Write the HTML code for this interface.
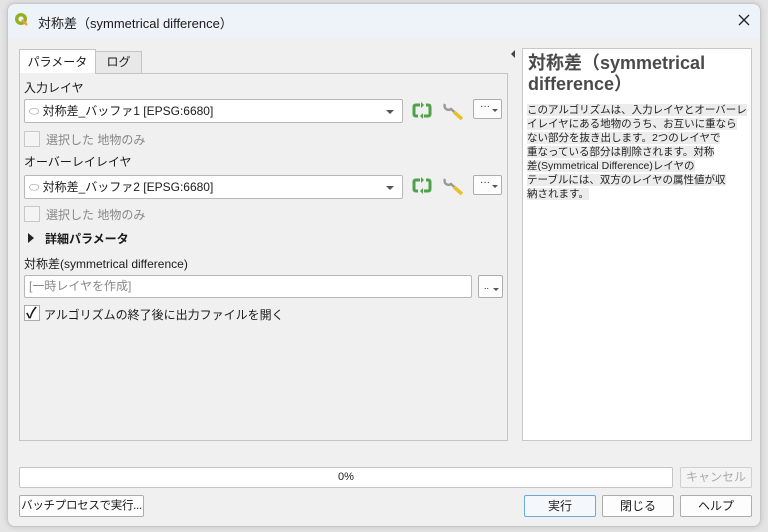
<!DOCTYPE html>
<html><head><meta charset="utf-8"><style>
*{box-sizing:border-box;margin:0;padding:0}
body{width:768px;height:532px;background:#e4e4e4;font-family:"Liberation Sans","Noto Sans CJK JP",sans-serif;font-size:12px;color:#1a1a1a;position:relative;overflow:hidden}
.a{position:absolute}
#win{left:7px;top:3px;width:754px;height:524px;background:#f0f0f0;border:1px solid #c8c8c8;border-radius:8px;overflow:hidden;box-shadow:0 0 6px rgba(0,0,0,.15)}
#title{left:0;top:0;width:754px;height:34px;background:#eef3f9}
.btn{position:absolute;background:#fdfdfd;border:1px solid #adadad;border-radius:2px;text-align:center;font-size:12px;line-height:19px;white-space:nowrap;overflow:hidden}
.combo{position:absolute;background:#fff;border:1px solid #b8b8b8;border-radius:2px;height:24px;line-height:22px;padding-left:4px;white-space:nowrap}
.chk{position:absolute;width:16px;height:16px;border:1px solid #c8c8c8;background:#f4f4f4}
.lbl{position:absolute;font-size:12px;white-space:nowrap}
.dd{position:absolute;right:8px;top:10px;width:0;height:0;border-left:4px solid transparent;border-right:4px solid transparent;border-top:4px solid #555}
.more{position:absolute;background:#fdfdfd;border:1px solid #adadad;border-radius:2px;width:29px;height:20px}
.hl{display:block;white-space:nowrap}
.hl span{background:#ececec}
</style></head><body>
<div id="win" class="a">
 <div id="title" class="a">
  <svg class="a" style="left:6px;top:8px" width="15" height="15" viewBox="0 0 15 15"><circle cx="7" cy="7" r="6" fill="#93b023"/><circle cx="7" cy="7" r="2.6" fill="#eef3f9"/><path d="M8 8 L13 13" stroke="#e9a23b" stroke-width="2.5"/></svg>
  <div class="lbl" style="left:30px;top:9px;font-size:13px">対称差（symmetrical difference）</div>
  <svg class="a" style="left:730px;top:10px" width="12" height="12"><path d="M1 1L11 11M11 1L1 11" stroke="#222" stroke-width="1.3"/></svg>
 </div>
</div>
<!-- tabs -->
<div class="a" style="left:19px;top:49px;width:77px;height:25px;background:#fff;border:1px solid #c4c4c4;border-bottom:none;text-align:center;line-height:24px">パラメータ</div>
<div class="a" style="left:95px;top:51px;width:47px;height:22px;background:#e8e8e8;border:1px solid #c4c4c4;border-bottom:none;text-align:center;line-height:21px">ログ</div>
<div class="a" style="left:19px;top:73px;width:489px;height:368px;border:1px solid #c4c4c4;background:#f0f0f0"></div>
<div class="a" style="left:20px;top:73px;width:75px;height:1px;background:#f0f0f0"></div>

<div class="lbl" style="left:24px;top:79px">入力レイヤ</div>
<div class="combo" style="left:24px;top:99px;width:379px"><span style="color:#999">⬭</span> 対称差_バッファ1 [EPSG:6680]<div class="dd"></div></div>
<div class="chk" style="left:24px;top:131px"></div>
<div class="lbl" style="left:46px;top:131px;color:#888">選択した 地物のみ</div>
<div class="lbl" style="left:24px;top:153px">オーバーレイレイヤ</div>
<div class="combo" style="left:24px;top:175px;width:379px"><span style="color:#999">⬭</span> 対称差_バッファ2 [EPSG:6680]<div class="dd"></div></div>
<div class="chk" style="left:24px;top:206px"></div>
<div class="lbl" style="left:46px;top:206px;color:#888">選択した 地物のみ</div>

<!-- icons row -->
<svg class="a" style="left:411px;top:102px" width="22" height="18" viewBox="0 0 22 18"><path d="M9 3H5Q3 3 3 5V12Q3 14 5 14H7M13 14H17Q19 14 19 12V5Q19 3 17 3H15" stroke="#4ea24a" stroke-width="3" fill="none"/><path d="M10 0L13 3L10 6Z M12 11L9 14L12 17Z" fill="#4ea24a"/></svg>
<svg class="a" style="left:443px;top:101px" width="22" height="20" viewBox="0 0 22 20"><path d="M2 3A4 4 0 0 0 8 8L18 17" stroke="#999" stroke-width="2.5" fill="none"/><path d="M11 11L19 18" stroke="#e5c12a" stroke-width="3.5"/></svg>
<div class="more" style="left:473px;top:99px"><span class="a" style="left:6px;top:1px;font-size:10px">···</span><div class="dd" style="right:3px;top:9px;border-width:3px"></div></div>
<svg class="a" style="left:411px;top:177px" width="22" height="18" viewBox="0 0 22 18"><path d="M9 3H5Q3 3 3 5V12Q3 14 5 14H7M13 14H17Q19 14 19 12V5Q19 3 17 3H15" stroke="#4ea24a" stroke-width="3" fill="none"/><path d="M10 0L13 3L10 6Z M12 11L9 14L12 17Z" fill="#4ea24a"/></svg>
<svg class="a" style="left:443px;top:176px" width="22" height="20" viewBox="0 0 22 20"><path d="M2 3A4 4 0 0 0 8 8L18 17" stroke="#999" stroke-width="2.5" fill="none"/><path d="M11 11L19 18" stroke="#e5c12a" stroke-width="3.5"/></svg>
<div class="more" style="left:473px;top:175px"><span class="a" style="left:6px;top:1px;font-size:10px">···</span><div class="dd" style="right:3px;top:9px;border-width:3px"></div></div>

<div class="a" style="left:28px;top:233px;width:0;height:0;border-top:5px solid transparent;border-bottom:5px solid transparent;border-left:6px solid #222"></div>
<div class="lbl" style="left:45px;top:230px;font-weight:bold">詳細パラメータ</div>
<div class="lbl" style="left:24px;top:255px">対称差(symmetrical difference)</div>
<div class="combo" style="left:24px;top:275px;width:448px;height:23px;line-height:21px;color:#888">[一時レイヤを作成]</div>
<div class="more" style="left:478px;top:275px;width:25px;height:23px"><span class="a" style="left:5px;top:5px;font-size:9px">..</span><div class="dd" style="right:3px;top:12px;border-width:3px"></div></div>
<div class="chk" style="left:24px;top:305px;background:#fff;border-color:#aaa"></div>
<div class="lbl" style="left:26px;top:302px;font-size:15px;font-weight:bold">✓</div>
<div class="lbl" style="left:44px;top:306px">アルゴリズムの終了後に出力ファイルを開く</div>

<!-- right help -->
<div class="a" style="left:511px;top:50px;width:0;height:0;border-top:4px solid transparent;border-bottom:4px solid transparent;border-right:4px solid #444"></div>
<div class="a" style="left:522px;top:48px;width:230px;height:393px;background:#fff;border:1px solid #c8c8c8"></div>
<div class="lbl" style="left:528px;top:53px;font-size:18px;font-weight:bold;color:#4a4a4a;line-height:21px;white-space:normal;width:220px">対称差（symmetrical<br>difference）</div>
<div class="lbl" style="left:527px;top:103px;width:222px;overflow:hidden;font-size:10.5px;line-height:14px;color:#222">
<span class="hl"><span>このアルゴリズムは、入力レイヤとオーバーレ</span></span>
<span class="hl"><span>イレイヤにある地物のうち、お互いに重なら</span></span>
<span class="hl"><span>ない部分を抜き出します。2つのレイヤで</span></span>
<span class="hl"><span>重なっている部分は削除されます。対称</span></span>
<span class="hl"><span>差(Symmetrical Difference)レイヤの</span></span>
<span class="hl"><span>テーブルには、双方のレイヤの属性値が収</span></span>
<span class="hl"><span>納されます。</span></span>
</div>

<!-- bottom -->
<div class="a" style="left:19px;top:467px;width:654px;height:21px;background:#fff;border:1px solid #c4c4c4;border-radius:2px;text-align:center;line-height:19px;font-size:11px">0%</div>
<div class="btn" style="left:680px;top:467px;width:72px;height:21px;color:#aaa;background:#f4f4f4;border-color:#d0d0d0">キャンセル</div>
<div class="btn" style="left:19px;top:495px;width:125px;height:22px;line-height:20px;font-size:11.5px;letter-spacing:-0.3px">バッチプロセスで実行...</div>
<div class="btn" style="left:524px;top:495px;width:72px;height:22px;line-height:20px;border-color:#6aa8de;background:#f4f8fc">実行</div>
<div class="btn" style="left:602px;top:495px;width:72px;height:22px;line-height:20px">閉じる</div>
<div class="btn" style="left:680px;top:495px;width:72px;height:22px;line-height:20px">ヘルプ</div>
</body></html>
